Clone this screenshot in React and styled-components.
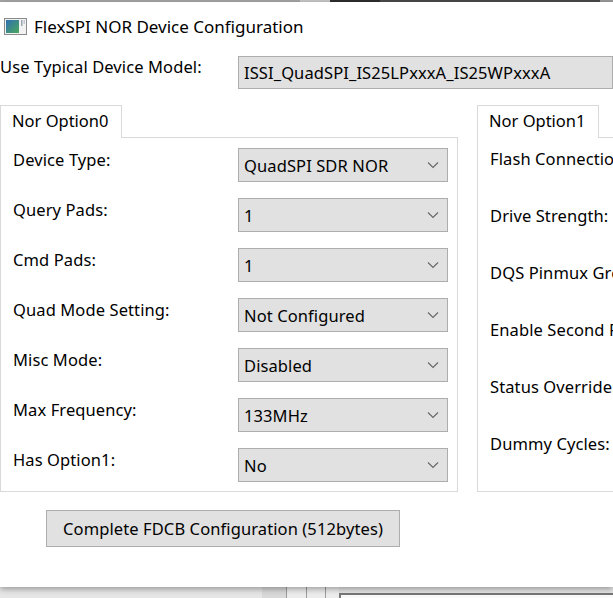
import React from "react";
import styled, { createGlobalStyle } from "styled-components";

const Global = createGlobalStyle`
  html, body { margin: 0; padding: 0; }
  body {
    width: 613px; height: 598px; overflow: hidden;
    background: #e4e4e4;
    font-family: "Noto Sans", "Open Sans", sans-serif;
    color: #000;
  }
`;

const Page = styled.div`
  width: 613px;
  height: 598px;
  display: flex;
  flex-direction: column;
  overflow: hidden;
`;

const TopEdge = styled.div`
  height: 2px;
  flex: none;
  background: linear-gradient(
    to right,
    #a6a6a6 0, #a6a6a6 300px, #c8c8c8 300px, #c8c8c8 330px,
    #2e2e2e 330px, #2e2e2e 380px, #4a4a4a 380px, #4a4a4a 600px, #9a9a9a 600px
  );
`;

const Window = styled.div`
  height: 585px;
  flex: none;
  background: #fff;
  box-shadow: 0 2px 6px rgba(0, 0, 0, 0.35);
  position: relative;
  z-index: 1;
  display: flex;
  flex-direction: column;
  overflow: hidden;
`;

const TitleBar = styled.div`
  height: 46px;
  display: flex;
  align-items: center;
  gap: 7px;
  padding: 2px 0 0 4px;
  box-sizing: border-box;
  font-size: 17px;
`;

const ModelRow = styled.div`
  display: flex;
  align-items: flex-start;
  height: 33px;
  margin-top: 8px;
`;

const ModelLabel = styled.div`
  width: 238px;
  flex: none;
  font-size: 16.5px;
  letter-spacing: 0.1px;
  line-height: 20px;
  padding-top: 1px;
  white-space: nowrap;
`;

const Field = styled.div`
  box-sizing: border-box;
  height: ${(p) => p.h || 34}px;
  width: ${(p) => (p.w ? p.w + "px" : "auto")};
  flex: ${(p) => (p.w ? "none" : "1")};
  background: #e1e1e1;
  border: 1px solid #adadad;
  display: flex;
  align-items: center;
  padding: 0 0 0 5px;
  font-size: 16.5px;
  letter-spacing: 0.1px;
  white-space: nowrap;
`;

const FieldText = styled.span`
  flex: 1;
`;

const Chevron = styled.svg`
  width: 12px;
  height: 8px;
  margin-right: 8px;
  flex: none;
`;

const TabsRow = styled.div`
  display: flex;
  gap: 19px;
  margin-top: 16px;
`;

const TabGroup = styled.div`
  width: ${(p) => p.w}px;
  flex: none;
  display: flex;
  flex-direction: column;
`;

const TabStrip = styled.div`
  display: flex;
  height: 33px;
`;

const Tab = styled.div`
  box-sizing: border-box;
  width: 122px;
  height: 33px;
  border: 1px solid #d9d9d9;
  border-bottom: none;
  background: #fff;
  font-size: 16.5px;
  line-height: 22px;
  padding: 4px 0 0 11px;
  white-space: nowrap;
`;

const TabFiller = styled.div`
  flex: 1;
  border-bottom: 1px solid #d9d9d9;
`;

const Panel = styled.div`
  box-sizing: border-box;
  height: 354px;
  border: 1px solid #d9d9d9;
  border-top: none;
  border-right: ${(p) => (p.open ? "none" : "1px solid #d9d9d9")};
  padding: ${(p) => p.pad};
  display: flex;
  flex-direction: column;
  gap: ${(p) => p.gap}px;
`;

const Row = styled.div`
  display: flex;
  align-items: flex-start;
  height: 34px;
`;

const Label = styled.div`
  width: 225px;
  flex: none;
  font-size: 16.5px;
  letter-spacing: 0.1px;
  line-height: 20px;
  padding-top: 2px;
  white-space: nowrap;
`;

const SideLabel = styled.div`
  height: 23px;
  font-size: 16.5px;
  letter-spacing: 0.1px;
  line-height: 22px;
  white-space: nowrap;
`;

const ButtonRow = styled.div`
  padding: 18px 0 0 46px;
`;

const Button = styled.button`
  box-sizing: border-box;
  width: 354px;
  height: 37px;
  background: #e1e1e1;
  border: 1px solid #adadad;
  font-family: inherit;
  font-size: 16.5px;
  letter-spacing: 0.1px;
  color: #000;
  padding: 0;
`;

const Desktop = styled.div`
  flex: 1;
  display: flex;
`;

const Strip = styled.div`
  width: ${(p) => p.w}px;
  flex: ${(p) => (p.w ? "none" : "1")};
  background: ${(p) => p.bg};
  border-right: ${(p) => (p.line ? "1px solid #9c9c9c" : "none")};
`;

const Sunken = styled.div`
  flex: 1;
  margin-top: 6px;
  background: #fafafa;
  border-top: 2px solid #777;
  border-left: 2px solid #777;
`;

const Arrow = () => (
  <Chevron viewBox="0 0 12 8">
    <path d="M1 1.5 L6 6.5 L11 1.5" fill="none" stroke="#666" strokeWidth="1.1" />
  </Chevron>
);

const Select = ({ value, w }) => (
  <Field w={w}>
    <FieldText>{value}</FieldText>
    <Arrow />
  </Field>
);

const AppIcon = () => (
  <svg width="23" height="17" viewBox="0 0 23 17">
    <defs>
      <linearGradient id="ig" x1="0" y1="0" x2="1" y2="1">
        <stop offset="0" stopColor="#2f6fb3" />
        <stop offset="1" stopColor="#4aa85a" />
      </linearGradient>
    </defs>
    <rect x="0.5" y="0.5" width="22" height="16" fill="#f2f2f2" stroke="#8a8a8a" />
    <rect x="2" y="2" width="13" height="13" fill="url(#ig)" />
    <rect x="17" y="2" width="1.5" height="6" fill="#9aa6b3" />
    <rect x="19.5" y="2" width="1.5" height="4" fill="#c0c8d0" />
  </svg>
);

const leftRows = [
  ["Device Type:", "QuadSPI SDR NOR"],
  ["Query Pads:", "1"],
  ["Cmd Pads:", "1"],
  ["Quad Mode Setting:", "Not Configured"],
  ["Misc Mode:", "Disabled"],
  ["Max Frequency:", "133MHz"],
  ["Has Option1:", "No"],
];

const rightLabels = [
  "Flash Connection",
  "Drive Strength:",
  "DQS Pinmux Group",
  "Enable Second Pinmux",
  "Status Override:",
  "Dummy Cycles:",
];

export default function App() {
  return (
    <>
      <Global />
      <Page>
        <TopEdge />
        <Window>
          <TitleBar>
            <AppIcon />
            <span>FlexSPI NOR Device Configuration</span>
          </TitleBar>
          <ModelRow>
            <ModelLabel>Use Typical Device Model:</ModelLabel>
            <Field h={33}>
              <FieldText>ISSI_QuadSPI_IS25LPxxxA_IS25WPxxxA</FieldText>
            </Field>
          </ModelRow>
          <TabsRow>
            <TabGroup w={458}>
              <TabStrip>
                <Tab>Nor Option0</Tab>
                <TabFiller />
              </TabStrip>
              <Panel pad="10px 0 0 12px" gap={16}>
                {leftRows.map(([l, v]) => (
                  <Row key={l}>
                    <Label>{l}</Label>
                    <Select value={v} w={210} />
                  </Row>
                ))}
              </Panel>
            </TabGroup>
            <TabGroup w={200}>
              <TabStrip>
                <Tab>Nor Option1</Tab>
                <TabFiller />
              </TabStrip>
              <Panel open pad="10px 0 0 12px" gap={34}>
                {rightLabels.map((l) => (
                  <SideLabel key={l}>{l}</SideLabel>
                ))}
              </Panel>
            </TabGroup>
          </TabsRow>
          <ButtonRow>
            <Button>Complete FDCB Configuration (512bytes)</Button>
          </ButtonRow>
        </Window>
        <Desktop>
          <Strip w={262} bg="#e6e6e6" />
          <Strip w={24} bg="#d9d9d9" line />
          <Strip w={19} bg="#ececec" line />
          <Strip w={18} bg="#ececec" line />
          <Strip w={13} bg="#ececec" />
          <Sunken />
        </Desktop>
      </Page>
    </>
  );
}
